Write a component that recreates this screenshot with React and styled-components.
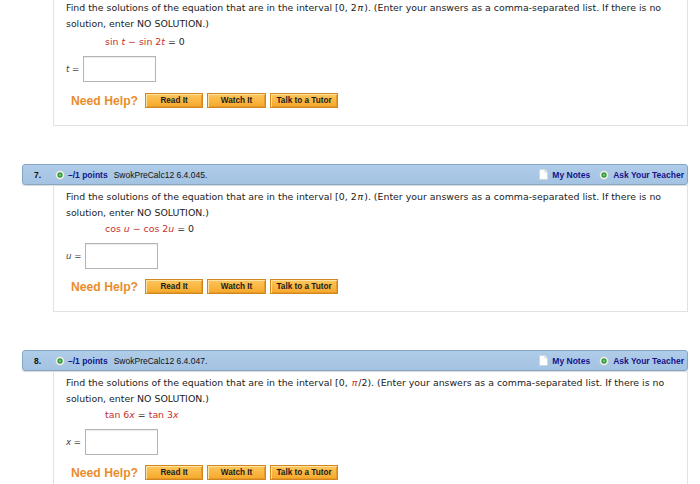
import React from 'react';
import styled, { createGlobalStyle } from 'styled-components';

const GlobalStyle = createGlobalStyle`
  html, body {
    margin: 0;
    padding: 0;
    background: #fff;
    overflow: hidden;
  }
`;

const Page = styled.div`
  width: 666px;
  padding-left: 22px;
  display: flex;
  flex-direction: column;
`;

const Block = styled.section`
  display: flex;
  flex-direction: column;
  margin-top: ${p => (p.first ? '0' : '38px')};
`;

const Header = styled.div`
  height: 19px;
  display: flex;
  align-items: center;
  background: linear-gradient(#afcce8, #a4c3e2);
  border: 1px solid #86a6c6;
  border-radius: 3px;
  box-shadow: 0 1px 1px rgba(0, 0, 0, 0.15);
  font-family: 'Liberation Sans', Arial, sans-serif;
  font-size: 8.5px;
  color: #111;
  padding: 0 3px 0 11px;
`;

const Number = styled.span`
  font-weight: 700;
  width: 21px;
`;

const Points = styled.span`
  font-weight: 700;
  color: #14148c;
  margin: 0 6px 0 3px;
`;

const Spacer = styled.span`
  flex: 1;
`;

const HeaderLink = styled.span`
  font-weight: 700;
  color: #14148c;
  margin-left: 4px;
  margin-right: ${p => p.gap || 0}px;
`;

const Body = styled.div`
  margin-left: 31px;
  border-left: 1px solid #e2e2e2;
  border-right: 1px solid #e2e2e2;
  border-bottom: 1px solid #e2e2e2;
  padding: ${p => (p.first ? '0' : '4px')} 12px 17px 12px;
  font-family: 'DejaVu Sans', Verdana, sans-serif;
  font-size: 9.4px;
  color: #222;
`;

const Question = styled.p`
  margin: 0;
  line-height: 16px;
`;

const Pi = styled.i`
  color: ${p => (p.red ? '#c8312d' : 'inherit')};
  margin: 0 1px;
`;

const Equation = styled.div`
  line-height: 16px;
  margin: ${p => (p.first ? '2px' : '0')} 0 0 39px;
  color: #222;
`;

const Red = styled.span`
  color: #c8312d;
`;

const AnswerRow = styled.div`
  display: flex;
  align-items: center;
  margin-top: 6px;
  gap: 4px;
`;

const Label = styled.span`
  white-space: nowrap;
  font-size: 8.6px;
  color: #444;
`;

const Input = styled.div`
  width: 71px;
  height: 24px;
  border: 1px solid #b4b4b4;
  box-shadow: inset 0 1px 1px rgba(0, 0, 0, 0.08);
  background: #fff;
`;

const HelpRow = styled.div`
  display: flex;
  align-items: center;
  margin: ${p => (p.first ? '11px' : '10px')} 0 0 5px;
  height: 15px;
`;

const NeedHelp = styled.span`
  font-family: 'Liberation Sans', Arial, sans-serif;
  font-weight: 700;
  font-size: 12.2px;
  color: #e98d2c;
  margin-right: 7px;
`;

const HelpButton = styled.span`
  width: ${p => p.w}px;
  height: 15px;
  box-sizing: border-box;
  margin-right: 4px;
  display: flex;
  align-items: center;
  justify-content: center;
  border: 1px solid #d2861e;
  box-shadow: inset 1px 1px 0 #fde2a2, inset -1px -1px 0 #e59a2a;
  background: linear-gradient(#fcc65c, #f7a82a);
  font-family: 'Liberation Sans', Arial, sans-serif;
  font-weight: 700;
  font-size: 8.2px;
  color: #1c1c1c;
`;

const PlusIcon = () => (
  <svg width="10" height="10" viewBox="0 0 10 10">
    <circle cx="5" cy="5" r="4.5" fill="#f6f6f6" stroke="#b8c4cf" strokeWidth="0.8" />
    <circle cx="5" cy="5" r="2.7" fill="#2f9c3a" />
    <path d="M5 3.9v2.2M3.9 5h2.2" stroke="#bfe6bf" strokeWidth="0.6" />
  </svg>
);

const NoteIcon = () => (
  <svg width="9" height="11" viewBox="0 0 9 11">
    <path d="M0.5 0.5h5.5l2.5 2.5v7.5h-8z" fill="#fff" stroke="#c9d3dc" strokeWidth="0.8" />
    <path d="M6 0.5v2.5h2.5" fill="#eee" stroke="#c9d3dc" strokeWidth="0.8" />
  </svg>
);

const questions = [
  {
    id: 6,
    pi: <>2<Pi>π</Pi></>,
    eq: <><Red>sin <i>t</i> − sin 2<i>t</i></Red> = 0</>,
    v: 't',
  },
  {
    id: 7,
    code: 'SwokPreCalc12 6.4.045.',
    pi: <>2<Pi>π</Pi></>,
    eq: <><Red>cos <i>u</i> − cos 2<i>u</i></Red> = 0</>,
    v: 'u',
  },
  {
    id: 8,
    code: 'SwokPreCalc12 6.4.047.',
    pi: <><Pi red>π</Pi>/2</>,
    eq: <><Red>tan 6<i>x</i></Red> = <Red>tan 3<i>x</i></Red></>,
    v: 'x',
  },
];

const App = () => (
  <>
    <GlobalStyle />
    <Page>
      {questions.map((q, i) => (
        <Block key={q.id} first={i === 0}>
          {q.code && (
            <Header>
              <Number>{q.id}.</Number>
              <PlusIcon />
              <Points>–/1 points</Points>
              <span>{q.code}</span>
              <Spacer />
              <NoteIcon />
              <HeaderLink gap={9}>My Notes</HeaderLink>
              <PlusIcon />
              <HeaderLink>Ask Your Teacher</HeaderLink>
            </Header>
          )}
          <Body first={i === 0}>
            <Question>
              Find the solutions of the equation that are in the interval [0, {q.pi}). (Enter your
              answers as a comma-separated list. If there is no solution, enter NO SOLUTION.)
            </Question>
            <Equation first={i === 0}>{q.eq}</Equation>
            <AnswerRow>
              <Label><i>{q.v}</i> =</Label>
              <Input />
            </AnswerRow>
            <HelpRow first={i === 0}>
              <NeedHelp>Need Help?</NeedHelp>
              <HelpButton w={58}>Read It</HelpButton>
              <HelpButton w={59}>Watch It</HelpButton>
              <HelpButton w={68}>Talk to a Tutor</HelpButton>
            </HelpRow>
          </Body>
        </Block>
      ))}
    </Page>
  </>
);

export default App;
